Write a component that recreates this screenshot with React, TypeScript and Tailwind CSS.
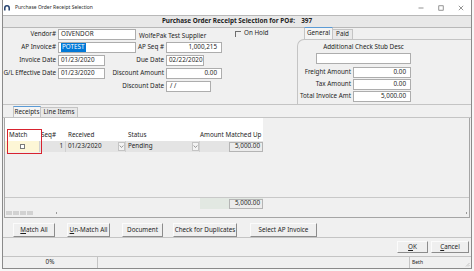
import type { ReactNode } from 'react'

function Box({ w, className = '', children }: { w: string; className?: string; children?: ReactNode }) {
  return (
    <div
      className={`${w} h-[11px] shrink-0 border border-[#adadad] bg-white flex items-center px-[2px] whitespace-nowrap overflow-hidden ${className}`}
    >
      {children}
    </div>
  )
}

function Label({ w, className = '', children }: { w: string; className?: string; children?: ReactNode }) {
  return <div className={`${w} shrink-0 text-right pr-[2px] whitespace-nowrap ${className}`}>{children}</div>
}

function Btn({ w, children }: { w: string; children: ReactNode }) {
  return (
    <div
      className={`${w} h-full shrink-0 flex items-center justify-center bg-[#efefef] border border-t-[#fbfbfb] border-l-[#fbfbfb] border-r-[#8c8c8c] border-b-[#8c8c8c] whitespace-nowrap`}
    >
      {children}
    </div>
  )
}

function Drop() {
  return (
    <div className="w-[7px] h-[9px] shrink-0 border border-[#c4c4c4] bg-[#f3f3f3] flex items-center justify-center">
      <svg width="5" height="3" viewBox="0 0 5 3">
        <path d="M0.6 0.6 L2.5 2.4 L4.4 0.6" fill="none" stroke="#808080" strokeWidth="0.8" />
      </svg>
    </div>
  )
}

export default function App() {
  return (
    <div className="w-[474px] h-[271px] bg-[#f7f7f7] overflow-hidden font-['Noto_Sans',sans-serif] text-[6.3px] leading-none text-[#1e1e1e]">
      <div className="ml-[2px] w-[470px] h-[269px] border-x border-b border-[#8a8a8a] flex flex-col bg-[#f0f0f0]">
        {/* title bar */}
        <div className="h-[15px] shrink-0 bg-white flex items-center">
          <svg className="ml-[1px]" width="6" height="6" viewBox="0 0 6 6">
            <path d="M0.8 5.6 L0.8 3 A2.2 2.2 0 0 1 5.2 3 L5.2 5.6" fill="none" stroke="#1f3d6b" strokeWidth="1.5" />
          </svg>
          <span className="ml-[5px] text-[5px] text-[#2b2b2b]">Purchase Order Receipt Selection</span>
          <div className="ml-auto flex h-full">
            <div className="w-[20px] flex items-center justify-center">
              <svg width="6" height="6" viewBox="0 0 6 6">
                <path d="M0.5 3 L5.5 3" stroke="#666" strokeWidth="0.7" />
              </svg>
            </div>
            <div className="w-[20px] flex items-center justify-center">
              <svg width="6" height="6" viewBox="0 0 6 6">
                <rect x="0.8" y="0.8" width="4.4" height="4.4" fill="none" stroke="#666" strokeWidth="0.7" />
              </svg>
            </div>
            <div className="w-[20px] flex items-center justify-center">
              <svg width="6" height="6" viewBox="0 0 6 6">
                <path d="M0.8 0.8 L5.2 5.2 M5.2 0.8 L0.8 5.2" stroke="#666" strokeWidth="0.7" />
              </svg>
            </div>
          </div>
        </div>

        {/* header */}
        <div className="h-[13px] shrink-0 border-y border-[#b8b8b8] bg-[#e8e8e8] flex items-center justify-center gap-[6px] font-bold text-[6.4px]">
          <span>Purchase Order Receipt Selection for PO#:</span>
          <span>397</span>
        </div>

        {/* top form */}
        <div className="h-[76px] shrink-0 flex">
          <div className="w-[294px] shrink-0 pt-[1px] flex flex-col gap-[2px]">
            <div className="flex items-center h-[11px]">
              <Label w="w-[55px]">Vendor#</Label>
              <Box w="w-[78px]">OIVENDOR</Box>
              <div className="w-[99px] shrink-0 pl-[3px] pt-[3px] whitespace-nowrap">WolfePak Test Supplier</div>
              <div className="w-[6px] h-[6px] border-t border-l border-[#6e6e6e] mb-[2px]" />
              <span className="ml-[3px] mb-[2px]">On Hold</span>
            </div>
            <div className="flex items-center h-[11px]">
              <Label w="w-[55px]">AP Invoice#</Label>
              <Box w="w-[78px]" className="px-[1px]">
                <span className="bg-[#0078d7] text-white px-[1px] py-[1px]">POTEST</span>
              </Box>
              <Label w="w-[30px]">AP Seq #</Label>
              <Box w="w-[56px]" className="bg-[#f2f2f2] justify-end pr-[4px]">1,000,215</Box>
            </div>
            <div className="flex items-center h-[11px]">
              <Label w="w-[55px]">Invoice Date</Label>
              <Box w="w-[47px]">01/23/2020</Box>
              <Label w="w-[61px]">Due Date</Label>
              <Box w="w-[38px]">02/22/2020</Box>
            </div>
            <div className="flex items-center h-[11px]">
              <Label w="w-[55px]">G/L Effective Date</Label>
              <Box w="w-[47px]">01/23/2020</Box>
              <Label w="w-[61px]">Discount Amount</Label>
              <Box w="w-[56px]" className="justify-end pr-[4px]">0.00</Box>
            </div>
            <div className="flex items-center h-[11px]">
              <Label w="w-[163px]">Discount Date</Label>
              <Box w="w-[45px]" className="pl-[3px]">/ /</Box>
            </div>
          </div>

          <div className="flex-1 flex flex-col">
            <div className="h-[11px] shrink-0 flex items-end pl-[7px]">
              <div className="w-[29px] h-[12px] bg-[#f4f4f4] border-x border-t border-[#c4c4c4] border-t-[#5b9bd5] flex items-center justify-center">
                General
              </div>
              <div className="w-[20px] h-[10px] bg-[#e9e9e9] border-r border-t border-[#c4c4c4] flex items-center justify-center">
                Paid
              </div>
            </div>
            <div className="flex-1 border-t border-l border-[#c4c4c4] rounded-tl-[7px] pt-[4px] flex flex-col">
              <div className="ml-[18px] w-[95px] h-[8px] text-center whitespace-nowrap">Additional Check Stub Desc</div>
              <div className="ml-[18px] mt-[1px]">
                <Box w="w-[95px]" />
              </div>
              <div className="flex items-center mt-[3px]">
                <Label w="w-[55px]" className="pr-[1px]">Freight Amount</Label>
                <Box w="w-[58px]" className="justify-end pr-[4px]">0.00</Box>
              </div>
              <div className="flex items-center mt-[1px]">
                <Label w="w-[55px]" className="pr-[1px]">Tax Amount</Label>
                <Box w="w-[58px]" className="justify-end pr-[4px]">0.00</Box>
              </div>
              <div className="flex items-center mt-[1px]">
                <Label w="w-[55px]" className="pr-[1px]">Total Invoice Amt</Label>
                <Box w="w-[58px]" className="justify-end pr-[4px]">5,000.00</Box>
              </div>
            </div>
          </div>
        </div>

        {/* lower tabs */}
        <div className="h-[13px] shrink-0 border-t border-[#c4c4c4] flex items-end pl-[10px]">
          <div className="w-[28px] h-[11px] bg-[#f4f4f4] border-x border-t border-[#c4c4c4] border-t-[#5b9bd5] flex items-center justify-center">
            Receipts
          </div>
          <div className="w-[37px] h-[10px] bg-[#e9e9e9] border-r border-t border-[#c4c4c4] flex items-center justify-center">
            Line Items
          </div>
        </div>

        {/* lower content */}
        <div className="h-[121px] shrink-0 border-t border-b border-[#c4c4c4] flex flex-col">
          <div className="relative h-[100px] shrink-0 mx-[1px] border-x border-b border-[#a5a5a5] flex flex-col">
            <div className="h-[23px] shrink-0 flex">
              <div className="w-[258px] bg-white flex items-end pb-[3px] whitespace-nowrap">
                <div className="w-[35px] pl-[4px]">Match</div>
                <div className="w-[26px] pl-[1px]">Seq#</div>
                <div className="w-[60px] pl-[2px]">Received</div>
                <div className="w-[74px] pl-[2px]">Status</div>
                <div className="w-[63px]">Amount Matched Up</div>
              </div>
            </div>
            <div className="h-[11px] shrink-0 flex whitespace-nowrap">
              <div className="w-[35px] bg-[#fdf6d6] border-r border-[#d0d0d0] flex items-center justify-center">
                <div className="w-[5px] h-[5px] border border-[#7a7a7a] bg-white" />
              </div>
              <div className="w-[26px] bg-[#e4e4e4] border-r border-[#d0d0d0] flex items-center justify-end pr-[2px]">1</div>
              <div className="w-[60px] bg-[#e4e4e4] border-r border-[#d0d0d0] flex items-center pl-[2px]">
                <span className="flex-1">01/23/2020</span>
                <Drop />
              </div>
              <div className="w-[74px] bg-[#e4e4e4] border-r border-[#d0d0d0] flex items-center pl-[2px]">
                <span className="flex-1">Pending</span>
                <Drop />
              </div>
              <div className="w-[63px] bg-[#e4e4e4] flex items-center justify-end">
                <div className="w-[34px] h-[10px] border border-[#b4b4b4] bg-[#ececec] flex items-center justify-end pr-[2px]">
                  5,000.00
                </div>
              </div>
            </div>
            <div className="flex-1" />
            <div className="h-[12px] shrink-0 border-t border-[#c8c8c8] flex">
              <div className="w-[195px]" />
              <div className="w-[63px] bg-[#e2e8e2] flex items-center justify-end">
                <div className="w-[34px] h-[10px] border border-[#b4b4b4] bg-[#ececec] flex items-center justify-end pr-[2px]">
                  5,000.00
                </div>
              </div>
            </div>
            <div className="h-[8px] shrink-0 flex items-center pl-[1px] gap-[1px]">
              <div className="w-[6px] h-[4px] bg-[#d2d2d2]" />
              <div className="w-[6px] h-[4px] bg-[#d2d2d2]" />
              <div className="w-[6px] h-[4px] bg-[#d2d2d2]" />
              <div className="w-[6px] h-[4px] bg-[#d2d2d2]" />
              <div className="ml-[22px] w-[1px] h-[2px] bg-[#9a9a9a]" />
              <div className="ml-auto mr-[2px] w-[1px] h-[2px] bg-[#9a9a9a]" />
            </div>
            <div className="absolute left-[2px] top-[11px] w-[35px] h-[25px] border-[1.5px] border-[#d8232f]" />
          </div>

          <div className="mt-[5px] h-[14px] shrink-0 flex pl-[10px]">
            <Btn w="w-[42px]">
              <span><u>M</u>atch All</span>
            </Btn>
            <div className="w-[12px]" />
            <Btn w="w-[43px]">
              <span><u>U</u>n-Match All</span>
            </Btn>
            <div className="w-[12px]" />
            <Btn w="w-[41px]">Document</Btn>
            <div className="w-[10px]" />
            <Btn w="w-[64px]">Check for Duplicates</Btn>
            <div className="w-[13px]" />
            <Btn w="w-[67px]">Select AP Invoice</Btn>
          </div>
        </div>

        {/* OK / Cancel */}
        <div className="h-[18px] shrink-0 flex items-center justify-end pr-[2px] gap-[3px]">
          <div className="h-[12px] flex">
            <Btn w="w-[31px]">
              <span><u>O</u>K</span>
            </Btn>
          </div>
          <div className="h-[12px] flex">
            <Btn w="w-[38px]">
              <span><u>C</u>ancel</span>
            </Btn>
          </div>
        </div>

        {/* status bar */}
        <div className="h-[12px] shrink-0 border-t border-[#c4c4c4] flex">
          <div className="w-[95px] border-r border-[#c4c4c4] flex items-center justify-center">0%</div>
          <div className="flex-1" />
          <div className="w-[62px] border-l border-[#c4c4c4] flex items-center pl-[2px] text-[5px] relative">
            Beth
            <svg className="absolute right-[1px] bottom-[1px]" width="5" height="5" viewBox="0 0 5 5">
              <path d="M4.5 1 L1 4.5 M4.5 3 L3 4.5" stroke="#a8a8a8" strokeWidth="0.6" />
            </svg>
          </div>
        </div>
      </div>
    </div>
  )
}
